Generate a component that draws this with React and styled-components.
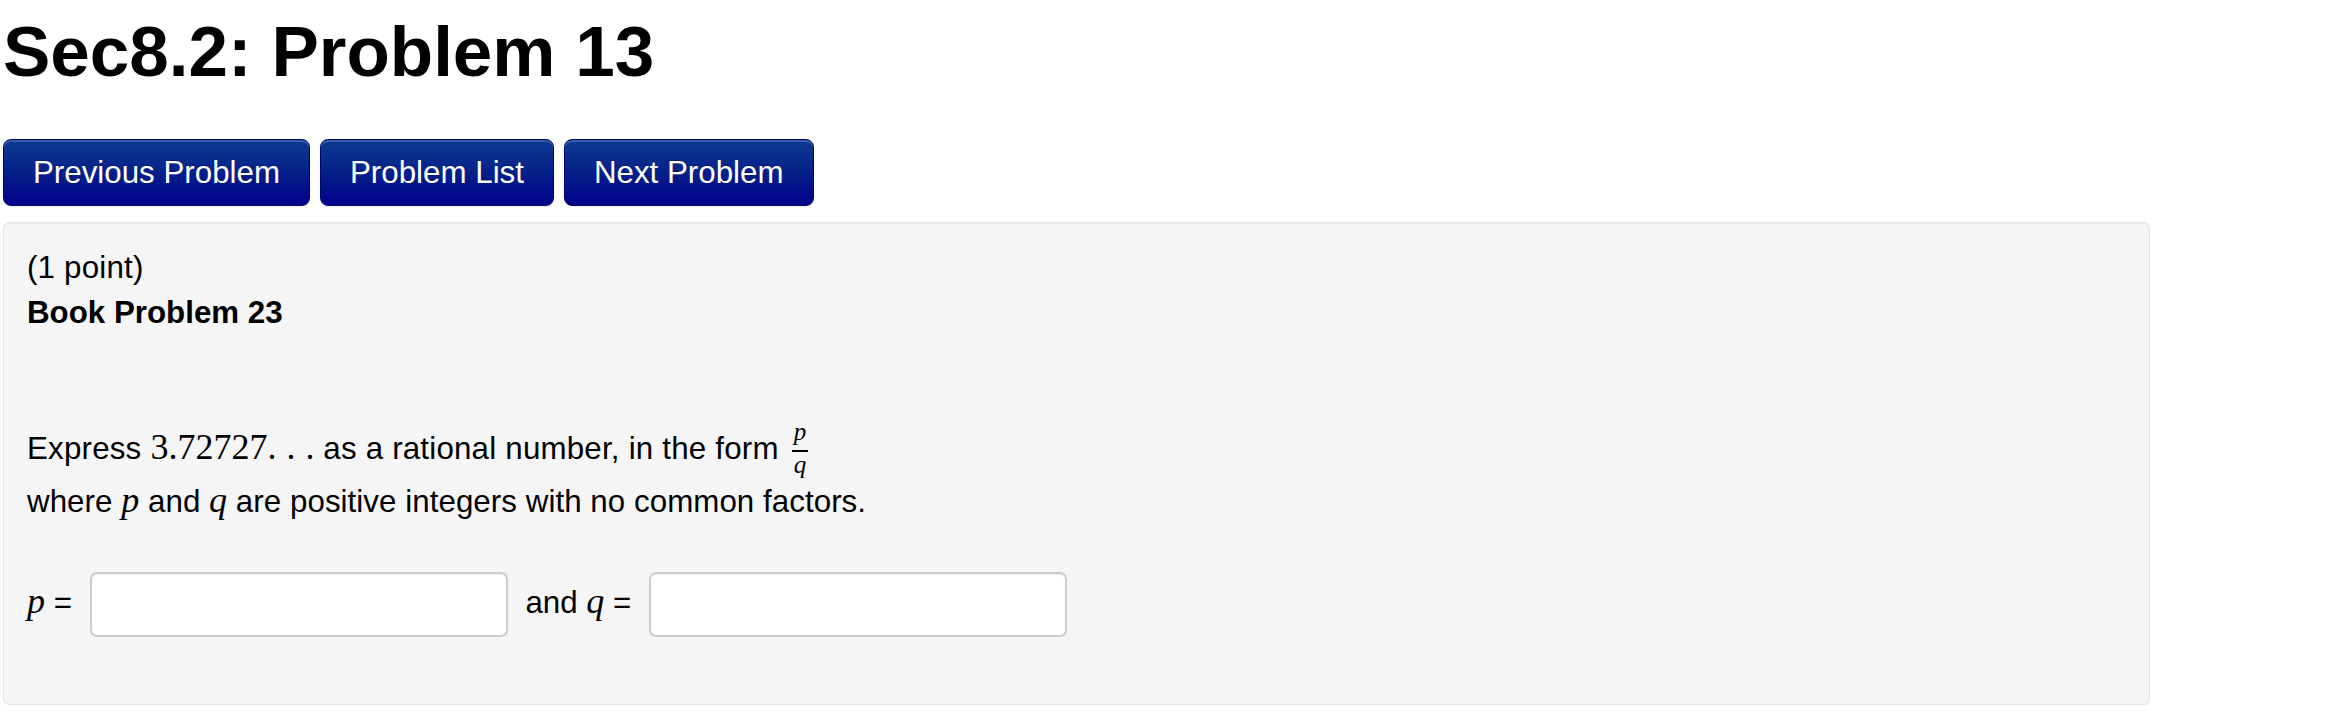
import React from "react";
import styled, { createGlobalStyle } from "styled-components";

const Global = createGlobalStyle`
  html, body { margin: 0; padding: 0; background: #ffffff; }
  body {
    font-family: "Liberation Sans", Arial, sans-serif;
    color: #000000;
  }
`;

const Page = styled.div`
  padding: 12px 3px 0 3px;
`;

const Title = styled.h1`
  margin: 0;
  font-size: 71px;
  line-height: 80px;
  font-weight: 700;
`;

const Nav = styled.nav`
  display: flex;
  gap: 10px;
  margin-top: 47px;
`;

const NavButton = styled.button`
  box-sizing: border-box;
  height: 67px;
  padding: 0 29px;
  font-family: "Liberation Sans", Arial, sans-serif;
  font-size: 31.3px;
  line-height: 1;
  color: #ffffff;
  text-shadow: 0 -1px 0 rgba(0, 0, 0, 0.25);
  background: linear-gradient(to bottom, #0e3b91 0%, #06238a 45%, #00008a 100%);
  border: 1px solid #00066e;
  border-radius: 8px;
  box-shadow: inset 0 2px 0 rgba(255, 255, 255, 0.18), 0 1px 2px rgba(0, 0, 0, 0.08);
  cursor: pointer;
`;

const Well = styled.section`
  box-sizing: border-box;
  width: 2147px;
  margin-top: 16px;
  padding: 22px 23px;
  background: #f5f5f5;
  border: 1px solid #e3e3e3;
  border-radius: 6px;
  box-shadow: inset 0 1px 1px rgba(0, 0, 0, 0.05);
  font-size: 31.3px;
  line-height: 45px;
`;

const Line = styled.div`
  letter-spacing: 0.2px;
`;

const Bold = styled.div`
  font-weight: 700;
`;

const Problem = styled.div`
  margin-top: 87px;
  letter-spacing: 0.2px;
`;

const Tight = styled.span`
  letter-spacing: 0.05px;
`;

const MathText = styled.span`
  font-family: "Liberation Serif", "Times New Roman", serif;
  font-size: 36px;
  letter-spacing: 0;
  font-style: ${(p) => (p.$italic ? "italic" : "normal")};
`;

const Dot = styled.span`
  & + & {
    margin-left: 10px;
  }
`;

const Frac = styled.span`
  display: inline-block;
  vertical-align: -14px;
  padding-bottom: 3px;
  text-align: center;
  font-family: "Liberation Serif", "Times New Roman", serif;
  font-style: italic;
  font-size: 25px;
  letter-spacing: 0;
  margin: 0 2px 0 4px;
`;

const Num = styled.span`
  display: block;
  line-height: 20px;
  margin-bottom: 8px;
  padding: 0 2px;
`;

const Bar = styled.span`
  display: block;
  height: 2px;
  background: #000;
`;

const Den = styled.span`
  display: block;
  line-height: 20px;
  margin-top: 3px;
  padding: 0 2px;
`;

const AnswerRow = styled.div`
  margin-top: 48px;
  margin-bottom: 45px;
`;

const AnswerInput = styled.input`
  box-sizing: border-box;
  width: 418px;
  height: 65px;
  margin: 0 9px;
  vertical-align: middle;
  background: #ffffff;
  border: 2px solid #cccccc;
  border-radius: 7px;
  box-shadow: inset 0 1px 1px rgba(0, 0, 0, 0.075);
  font-size: 28px;
  padding: 4px 8px;
`;

export default function App() {
  return (
    <>
      <Global />
      <Page>
        <Title>Sec8.2: Problem 13</Title>
        <Nav>
          <NavButton>Previous Problem</NavButton>
          <NavButton>Problem List</NavButton>
          <NavButton>Next Problem</NavButton>
        </Nav>
        <Well>
          <Line>(1 point)</Line>
          <Bold>Book Problem 23</Bold>
          <Problem>
            Express{" "}
            <MathText>
              3.72727<Dot>.</Dot>
              <Dot>.</Dot>
              <Dot>.</Dot>
            </MathText>{" "}
            as a rational number, in the form{" "}
            <Frac>
              <Num>p</Num>
              <Bar />
              <Den>q</Den>
            </Frac>
            <br />
            <Tight>
              where <MathText $italic>p</MathText> and <MathText $italic>q</MathText> are positive
              integers with no common factors.
            </Tight>
          </Problem>
          <AnswerRow>
            <MathText $italic>p</MathText> ={" "}
            <AnswerInput type="text" aria-label="p" />{" "}
            and <MathText $italic>q</MathText> ={" "}
            <AnswerInput type="text" aria-label="q" />
          </AnswerRow>
        </Well>
      </Page>
    </>
  );
}
